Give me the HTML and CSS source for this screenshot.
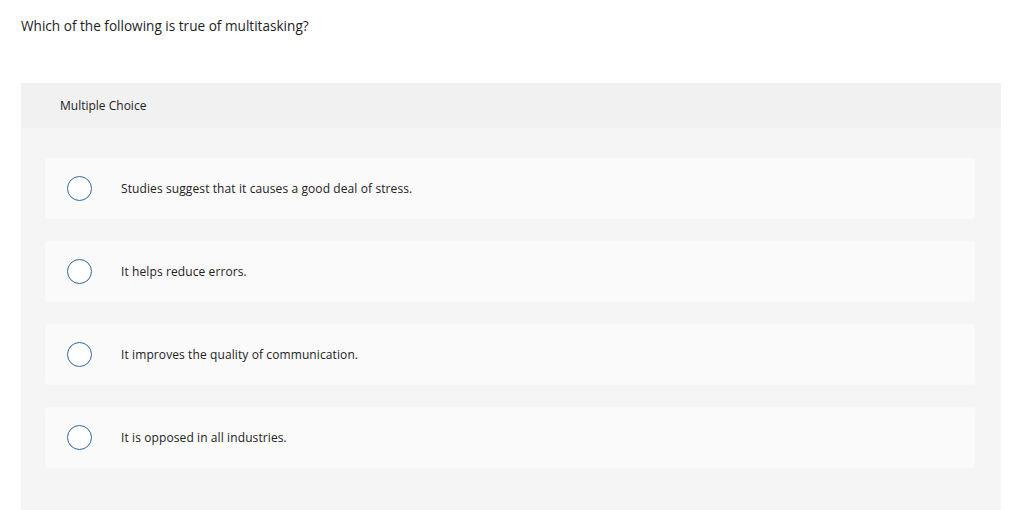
FILE: index.html
```html
<!DOCTYPE html>
<html lang="en">
<head>
<meta charset="utf-8">
<title>Multiple Choice</title>
<link rel="stylesheet" href="styles.css">
</head>
<body>
<div class="page">
  <p class="question">Which of the following is true of multitasking?</p>
  <section class="mc">
    <header class="mc-head">Multiple Choice</header>
    <div class="mc-body">
      <label class="opt"><span class="radio"></span><span class="opt-text">Studies suggest that it causes a good deal of stress.</span></label>
      <label class="opt"><span class="radio"></span><span class="opt-text">It helps reduce errors.</span></label>
      <label class="opt"><span class="radio"></span><span class="opt-text">It improves the quality of communication.</span></label>
      <label class="opt"><span class="radio"></span><span class="opt-text">It is opposed in all industries.</span></label>
    </div>
  </section>
</div>
</body>
</html>
```
FILE: styles.css
```css
html, body {
  margin: 0;
  padding: 0;
  background: #ffffff;
}
body {
  font-family: "Open Sans", Lato, sans-serif;
  color: #1a1a1a;
  height: 510px;
  overflow: hidden;
}
.page {
  padding: 17px 23px 0 21px;
}
.question {
  margin: 0;
  font-size: 13.6px;
  line-height: 18px;
  color: #1e1e1e;
}
.mc {
  margin-top: 48px;
  width: 980px;
}
.mc-head {
  background: #f1f1f1;
  height: 45px;
  display: flex;
  align-items: center;
  padding-left: 39px;
  font-size: 12px;
  color: #222;
}
.mc-body {
  background: #f5f5f5;
  padding: 30px 26px 60px 24px;
  display: flex;
  flex-direction: column;
  gap: 22px;
}
.opt {
  background: #fafafa;
  border-radius: 3px;
  height: 61px;
  display: flex;
  align-items: center;
  padding-left: 22px;
}
.radio {
  width: 23px;
  height: 23px;
  border: 1.5px solid #2f67a3;
  border-radius: 50%;
  background: #fff;
  flex: none;
}
.opt-text {
  margin-left: 29px;
  font-size: 12px;
  letter-spacing: 0.1px;
  color: #222;
}
```
